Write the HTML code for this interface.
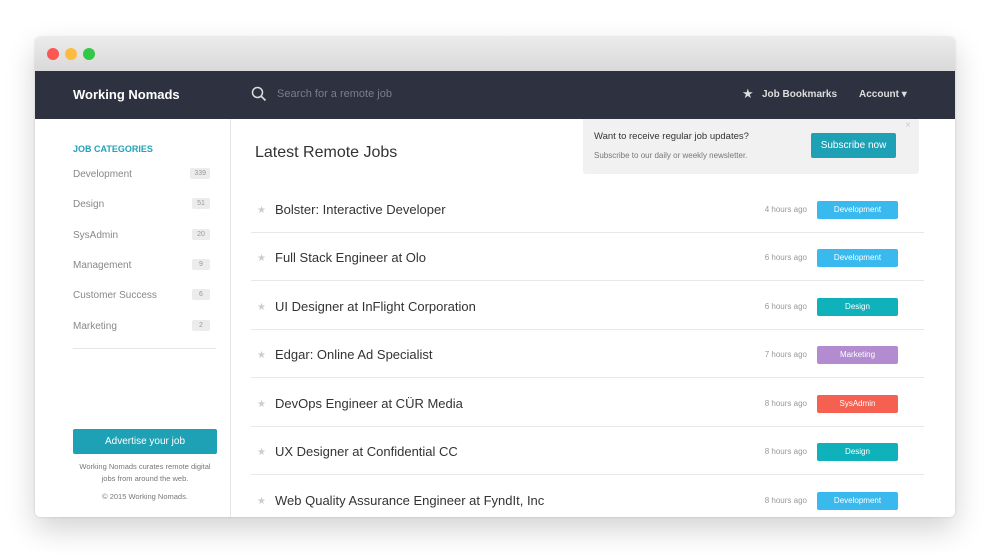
<!DOCTYPE html>
<html><head><meta charset="utf-8"><style>
*{margin:0;padding:0;box-sizing:border-box}
body{width:990px;height:553px;background:#fff;font-family:"Liberation Sans",sans-serif;position:relative;overflow:hidden}
.win{position:absolute;left:35px;top:37px;width:920px;height:480px;background:#fff;border-radius:5px;overflow:hidden;box-shadow:0 12px 30px rgba(0,0,0,.18),0 0 2px rgba(0,0,0,.15)}
.tb{height:34px;background:linear-gradient(#ebebeb,#d9d9d9);position:relative}
.dot{position:absolute;top:11px;width:12px;height:12px;border-radius:50%}
.nav{height:48px;background:#2d3140;position:relative;color:#fff}
.abs{position:absolute}
.side{position:absolute;left:0;top:82px;width:196px;height:398px;border-right:1px solid #e6e6e6}
.cat{position:absolute;left:38px;font-size:10px;color:#888;width:137px}
.cat span{position:absolute;right:0;top:-1px;background:#ececec;color:#999;font-size:7px;padding:2px 4px;border-radius:2px;min-width:18px;text-align:center}
.row{position:absolute;left:216px;width:673px;height:48px;border-bottom:1px solid #e8e8e8}
.row .st{position:absolute;left:6px;top:20px;color:#ccc;font-size:10px}
.row .t{position:absolute;left:24px;top:17px;font-size:13px;color:#333}
.row .h{position:absolute;right:117px;top:20px;font-size:8px;color:#999}
.row .b{position:absolute;right:26px;top:16px;width:81px;height:18px;border-radius:2px;color:#fff;font-size:8px;text-align:center;line-height:18px}
</style></head><body>
<div class="win">
<div class="tb"><div class="dot" style="left:12px;background:#fc5753"></div><div class="dot" style="left:30px;background:#fdbc40"></div><div class="dot" style="left:48px;background:#33c748"></div></div>
<div class="nav">
<div class="abs" style="left:38px;top:16px;font-size:13px;font-weight:bold">Working Nomads</div>
<svg class="abs" style="left:216px;top:15px" width="16" height="16" viewBox="0 0 16 16"><circle cx="6.5" cy="6.5" r="5" fill="none" stroke="#ddd" stroke-width="1.5"/><path d="M10 10l4.5 4.5" stroke="#ddd" stroke-width="1.6"/></svg>
<div class="abs" style="left:242px;top:17px;font-size:11px;color:#7b7f8c">Search for a remote job</div>
<div class="abs" style="left:707px;top:15px;font-size:13px;color:#ddd">★</div>
<div class="abs" style="left:727px;top:18px;font-size:10px;font-weight:bold;color:#ddd">Job Bookmarks</div>
<div class="abs" style="left:824px;top:18px;font-size:10px;font-weight:bold;color:#ddd">Account ▾</div>
</div>
<div class="side">
<div class="abs" style="left:38px;top:25px;font-size:9px;font-weight:bold;color:#21a3b8">JOB CATEGORIES</div>
<div class="cat" style="top:50px">Development<span>339</span></div>
<div class="cat" style="top:80px">Design<span>51</span></div>
<div class="cat" style="top:111px">SysAdmin<span>20</span></div>
<div class="cat" style="top:141px">Management<span>9</span></div>
<div class="cat" style="top:171px">Customer Success<span>6</span></div>
<div class="cat" style="top:202px">Marketing<span>2</span></div>
<div class="abs" style="left:38px;top:229px;width:143px;border-top:1px solid #e6e6e6"></div>
<div class="abs" style="left:38px;top:310px;width:144px;height:25px;background:#1fa1b5;border-radius:2px;color:#fff;font-size:10px;text-align:center;line-height:25px">Advertise your job</div>
<div class="abs" style="left:38px;top:342px;width:144px;text-align:center;font-size:7.5px;color:#777;line-height:12px">Working Nomads curates remote digital jobs from around the web.</div>
<div class="abs" style="left:38px;top:373px;width:144px;text-align:center;font-size:7.5px;color:#777">© 2015 Working Nomads.</div>
</div>
<div class="abs" style="left:220px;top:107px;font-size:16px;color:#333">Latest Remote Jobs</div>
<div class="abs" style="left:548px;top:82px;width:336px;height:55px;background:#f1f1f1;border-radius:0 0 3px 3px">
<div class="abs" style="left:11px;top:12px;font-size:9.5px;color:#333">Want to receive regular job updates?</div>
<div class="abs" style="left:11px;top:32px;font-size:8px;color:#777">Subscribe to our daily or weekly newsletter.</div>
<div class="abs" style="left:228px;top:14px;width:85px;height:25px;background:#1fa1b5;border-radius:2px;color:#fff;font-size:10px;text-align:center;line-height:25px">Subscribe now</div>
<div class="abs" style="left:322px;top:1px;font-size:10px;color:#ccc">×</div>
</div>
<div class="row" style="top:148px"><div class="st">★</div><div class="t">Bolster: Interactive Developer</div><div class="h">4 hours ago</div><div class="b" style="background:#3ab9ee">Development</div></div>
<div class="row" style="top:196px"><div class="st">★</div><div class="t">Full Stack Engineer at Olo</div><div class="h">6 hours ago</div><div class="b" style="background:#3ab9ee">Development</div></div>
<div class="row" style="top:245px"><div class="st">★</div><div class="t">UI Designer at InFlight Corporation</div><div class="h">6 hours ago</div><div class="b" style="background:#0fb1bb">Design</div></div>
<div class="row" style="top:293px"><div class="st">★</div><div class="t">Edgar: Online Ad Specialist</div><div class="h">7 hours ago</div><div class="b" style="background:#b28bd0">Marketing</div></div>
<div class="row" style="top:342px"><div class="st">★</div><div class="t">DevOps Engineer at CÜR Media</div><div class="h">8 hours ago</div><div class="b" style="background:#f56050">SysAdmin</div></div>
<div class="row" style="top:390px"><div class="st">★</div><div class="t">UX Designer at Confidential CC</div><div class="h">8 hours ago</div><div class="b" style="background:#0fb1bb">Design</div></div>
<div class="row" style="top:439px;border:none"><div class="st">★</div><div class="t">Web Quality Assurance Engineer at FyndIt, Inc</div><div class="h">8 hours ago</div><div class="b" style="background:#3ab9ee">Development</div></div>
</div>
</body></html>
